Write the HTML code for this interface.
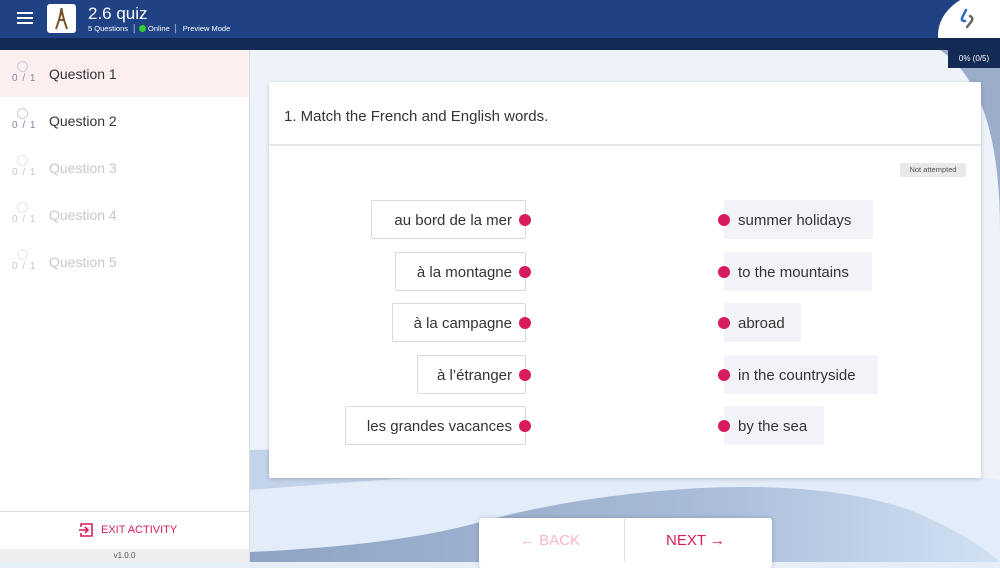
<!DOCTYPE html>
<html><head><meta charset="utf-8"><style>
*{box-sizing:border-box;margin:0;padding:0}
body{width:1000px;height:562px;overflow:hidden;font-family:"Liberation Sans",sans-serif;position:relative;background:#e6eef8}
.hdr{position:absolute;left:0;top:0;width:1000px;height:38px;background:#1e4283}
.strip{position:absolute;left:0;top:38px;width:1000px;height:12px;background:#132a55}
.side{position:absolute;left:0;top:50px;width:250px;height:512px;background:#fff;border-right:1px solid #ddd}
.q{position:absolute;left:0;width:249px;height:47px}
.q .c{position:absolute;left:17px;top:11px;width:11px;height:11px;border:1px solid #ccd;border-radius:50%}
.q .s{position:absolute;left:12px;top:23px;font-size:10px;color:#7a8aa0;letter-spacing:1px}
.q .t{position:absolute;left:49px;top:16px;font-size:14px;color:#333}
.dim .t,.dim .s{color:#c8c8c8}.dim .c{border-color:#e4e4e4}
.card{position:absolute;left:269px;top:82px;width:712px;height:396px;background:#fff;box-shadow:0 1px 4px rgba(0,0,0,.2);border-radius:2px}
.lb{position:absolute;height:39px;border:1px solid #d3d9e6;border-radius:2px;background:#fff;font-size:15px;color:#333;line-height:40px;padding:0 13px 0 10px;text-align:right}
.rb{position:absolute;left:724px;height:39px;background:#f2f3f8;border-radius:2px;font-size:15px;color:#333;line-height:41px;padding-left:14px}
.dot{position:absolute;width:12px;height:12px;border-radius:50%;background:#d81b5c}
</style></head><body>
<svg style="position:absolute;left:250px;top:50px" width="750" height="512">
<defs><linearGradient id="g" x1="0" x2="1" y1="0" y2="0"><stop offset="0" stop-color="#8fa3c4"/><stop offset="0.6" stop-color="#a8bbd8"/><stop offset="1" stop-color="#d2e2f4"/></linearGradient></defs>
<rect width="750" height="512" fill="#eef3fa"/>
<path d="M0 400 Q200 395 420 420 L0 440 Z" fill="#c3d3ea"/>
<path d="M0 440 Q250 420 450 410 Q600 405 750 430 L750 512 L0 512 Z" fill="#e2edf9"/>
<path d="M0 502 Q150 495 230 472 Q330 445 450 438 Q580 432 660 460 Q720 485 750 512 L0 512 Z" fill="url(#g)"/>
<path d="M690 0 Q750 40 750 180 L750 0 Z" fill="#9cadcb"/>
</svg>
<div class="hdr"></div>
<div class="strip"></div>
<div style="position:absolute;left:17px;top:12px;width:16px;height:2px;background:#fff;box-shadow:0 5px 0 #fff,0 10px 0 #fff"></div>
<div style="position:absolute;left:47px;top:4px;width:29px;height:29px;background:#fff;border-radius:3px"></div>
<svg style="position:absolute;left:47px;top:4px" width="29" height="29"><path d="M14.5 4 L13.5 10 L12 16 L9 25 M14.5 4 L15.5 10 L17 16 L20 25 M12 16 L17 16 M13.5 10 L15.5 10" stroke="#7a5430" stroke-width="2" fill="none"/></svg>
<div style="position:absolute;left:88px;top:4px;color:#fff;font-size:17px">2.6 quiz</div>
<div style="position:absolute;left:88px;top:24px;color:#fff;font-size:7.5px;white-space:nowrap">5 Questions &nbsp;│ <span style="display:inline-block;width:7px;height:7px;border-radius:50%;background:#3c3;vertical-align:-1px"></span> Online &nbsp;│ &nbsp;Preview Mode</div>
<div style="position:absolute;left:938px;top:-10px;width:120px;height:90px;border-radius:50%;background:#fff;clip-path:inset(0 0 calc(100% - 48px) 0)"></div>
<svg style="position:absolute;left:958px;top:8px" width="20" height="22"><path d="M8 2 L4 10 Q3 13 7 13" stroke="#2a6ac8" stroke-width="2.5" fill="none" stroke-linecap="round"/><path d="M12 8 Q16 10 13 14 L9 19" stroke="#666" stroke-width="2.5" fill="none" stroke-linecap="round"/></svg>
<div style="position:absolute;left:948px;top:50px;width:52px;height:18px;background:#132a55;color:#fff;font-size:8px;text-align:center;line-height:18px">0% (0/5)</div>
<div class="side">
<div class="q" style="top:0;background:#fdeef0"><div class="c"></div><div class="s">0 / 1</div><div class="t">Question 1</div></div>
<div class="q" style="top:47px"><div class="c"></div><div class="s">0 / 1</div><div class="t">Question 2</div></div>
<div class="q dim" style="top:94px"><div class="c"></div><div class="s">0 / 1</div><div class="t">Question 3</div></div>
<div class="q dim" style="top:141px"><div class="c"></div><div class="s">0 / 1</div><div class="t">Question 4</div></div>
<div class="q dim" style="top:188px"><div class="c"></div><div class="s">0 / 1</div><div class="t">Question 5</div></div>
<div style="position:absolute;left:0;top:461px;width:249px;height:1px;background:#ddd"></div>
<svg style="position:absolute;left:78px;top:472px" width="16" height="16"><path d="M3 5 V2 H14 V14 H3 V11" stroke="#d81b5c" stroke-width="1.6" fill="none"/><path d="M1 8 H10 M7 5 L10 8 L7 11" stroke="#d81b5c" stroke-width="1.6" fill="none"/></svg>
<div style="position:absolute;left:101px;top:474px;font-size:11px;color:#d81b5c">EXIT ACTIVITY</div>
<div style="position:absolute;left:0;top:499px;width:249px;height:13px;background:#eee;font-size:8px;color:#555;text-align:center;line-height:13px">v1.0.0</div>
</div>
<div class="card">
<div style="position:absolute;left:15px;top:26px;font-size:15px;color:#333">1. Match the French and English words.</div>
<div style="position:absolute;left:0;top:62px;width:712px;height:2px;background:#e4e6ea"></div>
<div style="position:absolute;left:631px;top:81px;width:66px;height:14px;background:#e8e8e8;border-radius:2px;font-size:7.5px;color:#555;text-align:center;line-height:14px">Not attempted</div>
</div>
<div class="lb" style="left:371px;top:200px;width:155px">au bord de la mer</div>
<div class="lb" style="left:395px;top:252px;width:131px">à la montagne</div>
<div class="lb" style="left:392px;top:303px;width:134px">à la campagne</div>
<div class="lb" style="left:417px;top:355px;width:109px">à l’étranger</div>
<div class="lb" style="left:345px;top:406px;width:181px">les grandes vacances</div>
<div class="rb" style="top:200px;width:149px">summer holidays</div>
<div class="rb" style="top:252px;width:148px">to the mountains</div>
<div class="rb" style="top:303px;width:77px">abroad</div>
<div class="rb" style="top:355px;width:154px">in the countryside</div>
<div class="rb" style="top:406px;width:100px">by the sea</div>
<div class="dot" style="left:519px;top:214px"></div><div class="dot" style="left:519px;top:266px"></div><div class="dot" style="left:519px;top:317px"></div><div class="dot" style="left:519px;top:369px"></div><div class="dot" style="left:519px;top:420px"></div>
<div class="dot" style="left:718px;top:214px"></div><div class="dot" style="left:718px;top:266px"></div><div class="dot" style="left:718px;top:317px"></div><div class="dot" style="left:718px;top:369px"></div><div class="dot" style="left:718px;top:420px"></div>
<div style="position:absolute;left:479px;top:518px;width:293px;height:50px;background:#fff;border-radius:3px;box-shadow:0 0 4px rgba(0,0,0,.2)"></div>
<div style="position:absolute;left:624px;top:518px;width:1px;height:44px;background:#e2e2e2"></div>
<div style="position:absolute;left:520px;top:532px;font-size:15px;color:#f6b6c9">← BACK</div>
<div style="position:absolute;left:666px;top:532px;font-size:15px;color:#d81b5c">NEXT →</div>
</body></html>
